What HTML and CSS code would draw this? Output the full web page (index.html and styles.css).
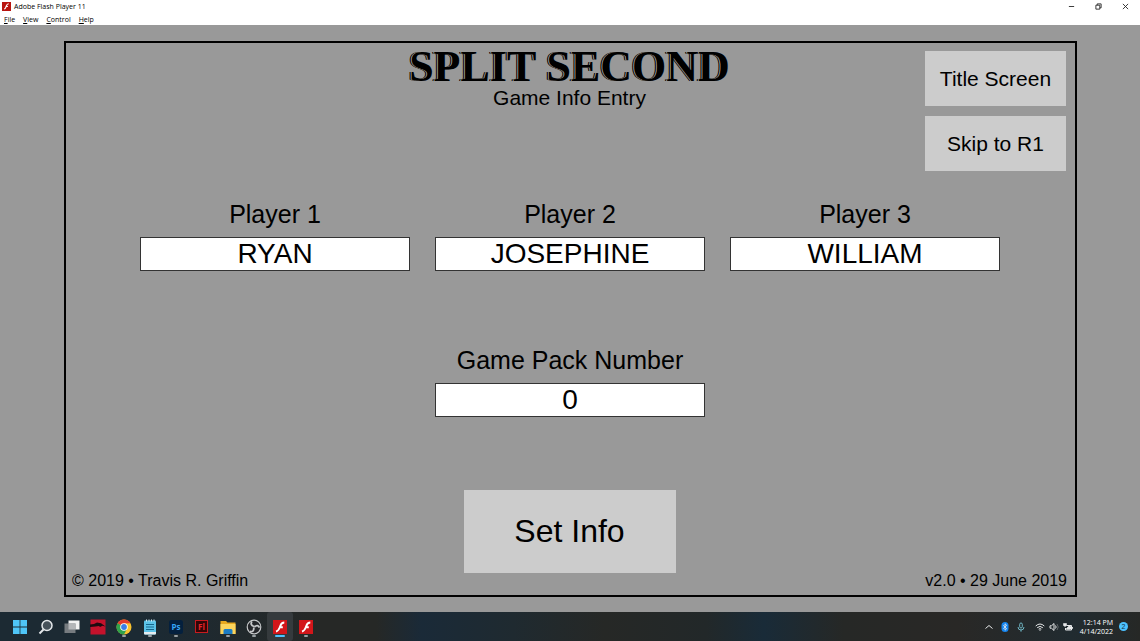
FILE: index.html
```html
<!DOCTYPE html>
<html lang="en">

<head>
    <meta charset="utf-8">
    <title>Adobe Flash Player 11</title>
    <link rel="stylesheet" href="styles.css">
</head>

<body>
    <header class="window_bar">
        <div class="title_row">
            <svg class="app_icon" viewBox="0 0 16 16">
                <rect width="16" height="16" fill="#b8140f"/>
                <path d="M12 3.200c-3.600 0-4 3-5 5.600-.7 1.800-1.400 3.200-3.200 3.600M7.300 8h3.200" fill="none" stroke="#fff" stroke-width="2"/>
            </svg>
            <p class="app_name">Adobe Flash Player 11</p>
            <div class="window_controls">
                <button class="control" aria-label="Minimize">
                    <svg viewBox="0 0 8 8"><path d="M1 4h6"/></svg>
                </button>
                <button class="control" aria-label="Restore">
                    <svg viewBox="0 0 8 8"><path d="M1 2.500h4.500v4.500h-4.500zM2.500 2.500v-1.500h4.500v4.500h-1.500"/></svg>
                </button>
                <button class="control" aria-label="Close">
                    <svg viewBox="0 0 8 8"><path d="M1 1l6 6M7 1l-6 6"/></svg>
                </button>
            </div>
        </div>
        <nav class="menu">
            <a href="#"><u>F</u>ile</a>
            <a href="#"><u>V</u>iew</a>
            <a href="#"><u>C</u>ontrol</a>
            <a href="#"><u>H</u>elp</a>
        </nav>
    </header>

    <main class="stage">
        <form class="panel">
            <div class="panel_top">
                <div class="heading">
                    <h1 class="logo">SPLIT SECOND</h1>
                    <p class="subtitle">Game Info Entry</p>
                </div>
                <div class="shortcuts">
                    <button type="button" class="btn">Title Screen</button>
                    <button type="button" class="btn">Skip to R1</button>
                </div>
            </div>

            <div class="fields">
                <div class="field">
                    <label for="player1">Player 1</label>
                    <input type="text" id="player1" value="RYAN">
                </div>
                <div class="field">
                    <label for="player2">Player 2</label>
                    <input type="text" id="player2" value="JOSEPHINE">
                </div>
                <div class="field">
                    <label for="player3">Player 3</label>
                    <input type="text" id="player3" value="WILLIAM">
                </div>
                <div class="field field_pack">
                    <label for="pack">Game Pack Number</label>
                    <input type="text" id="pack" value="0">
                </div>
            </div>

            <button type="button" class="btn btn_large">Set Info</button>

            <div class="panel_bottom">
                <p>© 2019 • Travis R. Griffin</p>
                <p>v2.0 • 29 June 2019</p>
            </div>
        </form>
    </main>

    <footer class="taskbar">
        <div class="tasks">
            <button class="task" aria-label="Start">
                <svg viewBox="0 0 16 16">
                    <path d="M1 1h6.600v6.600h-6.600zM8.400 1h6.600v6.600h-6.600zM1 8.400h6.600v6.600h-6.600zM8.400 8.400h6.600v6.600h-6.600z" fill="#4fc5f7"/>
                </svg>
            </button>
            <button class="task" aria-label="Search">
                <svg viewBox="0 0 16 16">
                    <circle cx="9" cy="6.500" r="5" fill="#46525a" stroke="#e4e8ea" stroke-width="1.500"/>
                    <path d="M5.500 10.500l-4 4" stroke="#e4e8ea" stroke-width="2"/>
                </svg>
            </button>
            <button class="task" aria-label="Task view">
                <svg viewBox="0 0 16 16">
                    <rect x="4.500" y="1.500" width="11" height="9" fill="#f2f2f2"/>
                    <rect x=".5" y="4.500" width="11" height="9.500" fill="#777c80"/>
                    <rect x="4.500" y="4.500" width="7" height="6" fill="#b4b6b8"/>
                </svg>
            </button>
            <button class="task" aria-label="Dragon">
                <svg viewBox="0 0 16 16">
                    <rect x=".5" y=".5" width="15" height="15" fill="#c4122c"/>
                    <path d="M0 5.500l4-.5 3-1.500 4 .7 4.500 3.300-3-.7-2.500 1.200-1-1-3.500.5-5.500.5z" fill="#1c0b10"/>
                </svg>
            </button>
            <button class="task running" aria-label="Chrome">
                <svg viewBox="0 0 16 16">
                    <circle cx="8" cy="8" r="7.500" fill="#f9c22e"/>
                    <path d="M8 8L1.500 4.250A7.500 7.500 0 0 1 14.500 4.250L8 4.500z" fill="#e33b2e"/>
                    <path d="M8 8L1.500 4.250A7.500 7.500 0 0 0 8 15.500L11 9.700z" fill="#2fa24c"/>
                    <circle cx="8" cy="8" r="3.800" fill="#fff"/>
                    <circle cx="8" cy="8" r="2.900" fill="#3b7de8"/>
                </svg>
            </button>
            <button class="task running" aria-label="Notepad">
                <svg viewBox="0 0 16 16">
                    <rect x="2" y="1.500" width="12" height="14" rx="1" fill="#5cc3e8"/>
                    <path d="M2 13h12v1.500a1 1 0 0 1-1 1h-10a1 1 0 0 1-1-1z" fill="#e6edf0"/>
                    <path d="M4 5.500h8M4 8h8M4 10.500h8" stroke="#17688e"/>
                    <path d="M4.500 .5v2M7 .5v2M9.500 .5v2M12 .5v2" stroke="#d6f0fa"/>
                </svg>
            </button>
            <button class="task running" aria-label="Photoshop">
                <svg viewBox="0 0 16 16">
                    <rect x="1" y="1" width="14" height="14" rx="2.500" fill="#04203e"/>
                    <text x="8" y="11" class="glyph" fill="#36a6f8">Ps</text>
                </svg>
            </button>
            <button class="task" aria-label="Flash">
                <svg viewBox="0 0 16 16">
                    <rect x="1.500" y="1.500" width="12" height="12" fill="#330607" stroke="#c71b1f"/>
                    <text x="7.500" y="11" class="glyph" fill="#e6252a">Fl</text>
                </svg>
            </button>
            <button class="task running" aria-label="File Explorer">
                <svg viewBox="0 0 16 16">
                    <path d="M.5 2h5.500l1.500 1.500h8v11.500h-15z" fill="#e9a91f"/>
                    <path d="M.5 5h15v10h-15z" fill="#fcd45c"/>
                    <path d="M3.500 15v-3.500a1.500 1.500 0 0 1 1.500-1.500h6a1.500 1.500 0 0 1 1.500 1.500v3.500z" fill="#1c7cc4"/>
                </svg>
            </button>
            <button class="task running" aria-label="OBS">
                <svg viewBox="0 0 16 16">
                    <circle cx="8" cy="8" r="6.800" fill="#24262a" stroke="#c6c8ca" stroke-width="1.200"/>
                    <path d="M8 7.500c-3-1-3.500-3-2-5M8.500 8c2-2.300 4-1.500 5 .7M7.700 8.500c.5 3-1 4.500-3.700 4" fill="none" stroke="#c6c8ca" stroke-width="1.800"/>
                </svg>
            </button>
            <button class="task running active" aria-label="Flash Player">
                <svg viewBox="0 0 16 16">
                    <rect x="1" y="1" width="14" height="14" fill="#d3161a"/>
                    <path d="M12.300 3.500c-3.600 0-3.600 2.800-4.600 5-.7 1.800-1.600 3.500-3.700 4M7.500 8.200h3.300" fill="none" stroke="#fff" stroke-width="1.900"/>
                </svg>
            </button>
            <button class="task running" aria-label="Flash Player">
                <svg viewBox="0 0 16 16">
                    <rect x="1" y="1" width="14" height="14" fill="#d3161a"/>
                    <path d="M12.300 3.500c-3.600 0-3.600 2.800-4.600 5-.7 1.800-1.600 3.500-3.700 4M7.500 8.200h3.300" fill="none" stroke="#fff" stroke-width="1.900"/>
                </svg>
            </button>
        </div>

        <div class="tray">
            <svg viewBox="0 0 10 10"><path d="M1.500 6.500l3.500-3 3.500 3"/></svg>
            <svg viewBox="0 0 10 10">
                <rect x="1.500" width="7" height="10" rx="3.500" fill="#1686f0" stroke="none"/>
                <path d="M3.200 3.300l3.500 3.400-1.700 1.500v-6.400l1.700 1.500-3.500 3.400" stroke-width=".8"/>
            </svg>
            <svg viewBox="0 0 10 10" class="mic">
                <rect x="3.700" y="1" width="2.600" height="5" rx="1.300"/>
                <path d="M2 5a3 3 0 0 0 6 0M5 8v1.700"/>
            </svg>
            <div class="status">
                <svg viewBox="0 0 10 10">
                    <path d="M.7 4q4.300-4 8.600 0M2.200 5.700q2.800-2.600 5.600 0M3.700 7.200q1.300-1.200 2.600 0"/>
                    <circle cx="5" cy="8.200" r=".6" fill="#e8eaeb" stroke="none"/>
                </svg>
                <svg viewBox="0 0 10 10">
                    <path d="M1 3.800h1.500l2.500-2.300v7l-2.500-2.300h-1.500z"/>
                    <path d="M6.500 3.500q1.300 1.500 0 3"/>
                    <path d="M8 2q2.500 3 0 6" stroke="#61676a"/>
                </svg>
                <svg viewBox="0 0 10 10">
                    <path d="M3.500 3.500h5v4.500h-6v-2M9.600 5v1.800"/>
                    <path d="M5.500 4.500h2v2.500h-4z" fill="#e8eaeb"/>
                    <path d="M.5 1.500h3v2l-1.500 1-1.500-1z" fill="#e8eaeb" stroke-width=".6"/>
                </svg>
            </div>
            <div class="clock">
                <p>12:14 PM</p>
                <p>4/14/2022</p>
            </div>
            <span class="badge">2</span>
        </div>
    </footer>
</body>

</html>
```
FILE: styles.css
```css
* {
    box-sizing: border-box;
}

body {
    margin: 0;
    min-height: 100vh;
    display: flex;
    flex-direction: column;
    font-family: "Liberation Sans", Arial, sans-serif;
    color: black;
    background-color: #999999;
}

p,
h1 {
    margin: 0;
}

button {
    border: none;
    padding: 0;
    color: inherit;
    font-family: inherit;
    background: none;
}

a {
    color: black;
    text-decoration: none;
}

/* window */

.window_bar {
    background-color: white;
    font-family: "Open Sans", sans-serif;
    font-size: 7px;
    line-height: 12px;
}

.title_row {
    display: flex;
    align-items: center;
    height: 13px;
    padding: 0 1px 0 2px;
}

.app_icon {
    width: 9px;
    height: 9px;
    margin-right: 3px;
}

.window_controls {
    display: flex;
    margin-left: auto;
}

.control {
    width: 27px;
    height: 13px;
    display: flex;
    align-items: center;
    justify-content: center;
}

.control svg {
    width: 7px;
    height: 7px;
    fill: none;
    stroke: #222222;
    stroke-width: 1;
}

.menu {
    display: flex;
    gap: 8px;
    height: 12px;
    padding-left: 4px;
    line-height: 14px;
}

/* stage */

.stage {
    flex: 1;
    display: flex;
    padding: 16px 63px 15px 64px;
}

.panel {
    flex: 1;
    display: flex;
    flex-direction: column;
    border: 2px solid black;
    padding: 8px 8px 7px 6px;
}

.panel_top {
    display: grid;
    grid-template-columns: 1fr auto 1fr;
    height: 150px;
}

.heading {
    grid-column: 2;
    text-align: center;
}

.logo {
    font-family: "Liberation Serif", "Times New Roman", serif;
    font-size: 44px;
    line-height: 32px;
    font-weight: bold;
    text-shadow: -1px 0 #999999, -2px 0 black;
}

.subtitle {
    padding-top: 3px;
    font-size: 21px;
    line-height: 24px;
}

.shortcuts {
    justify-self: end;
    width: 142px;
    padding-right: 1px;
    display: flex;
    flex-direction: column;
    gap: 10px;
}

.btn {
    height: 55px;
    font-size: 21px;
    background-color: #cccccc;
}

.fields {
    display: grid;
    grid-template-columns: repeat(3, 1fr);
    gap: 76px 25px;
    padding: 0 67px 0 68px;
}

.field {
    display: flex;
    flex-direction: column;
    text-align: center;
}

.field_pack {
    grid-column: 2;
}

.field label {
    font-size: 25px;
    line-height: 26px;
    padding-bottom: 10px;
}

.field input {
    width: 100%;
    height: 34px;
    padding: 0;
    border: 1px solid #333333;
    font-family: inherit;
    font-size: 28px;
    text-align: center;
    background-color: white;
}

.btn_large {
    width: 212px;
    height: 83px;
    margin-top: auto;
    align-self: center;
    font-size: 32px;
}

.panel_bottom {
    display: flex;
    justify-content: space-between;
    font-size: 16px;
    line-height: 15px;
}

/* taskbar */

.taskbar {
    display: flex;
    justify-content: space-between;
    height: 29px;
    background: linear-gradient(90deg, #1c2a33 0%, #1c2a33 14%, #262826 28%, #262826 33%, #1a2a38 37%, #1f2a30 45%, #262826 53%, #222829 62%, #192b38 67%, #262826 74%, #292826 84%, #212b30 94%, #262826 100%);
    color: white;
}

.tasks {
    display: flex;
    padding-left: 7px;
}

.task {
    width: 26px;
    display: flex;
    flex-direction: column;
    align-items: center;
    padding-top: 7px;
}

.task svg {
    width: 16px;
    height: 16px;
}

.running::after {
    content: "";
    width: 4px;
    height: 2px;
    border-radius: 1px;
    background-color: #9aa0a4;
}

.active {
    background-color: #353a3d;
    border-radius: 3px;
}

.active::after {
    width: 10px;
    background-color: #4cc2ff;
}

.glyph {
    font-family: "Open Sans", sans-serif;
    font-size: 8px;
    font-weight: bold;
    text-anchor: middle;
}

.tray {
    display: flex;
    align-items: center;
    gap: 6px;
    padding-right: 12px;
}

.tray svg {
    width: 10px;
    height: 10px;
    fill: none;
    stroke: #e8eaeb;
    stroke-width: 1;
}

.tray .mic {
    stroke: #6fb6c4;
}

.status {
    display: flex;
    gap: 4px;
    padding-left: 3px;
}

.clock {
    padding-left: 1px;
    font-family: "Open Sans", sans-serif;
    font-size: 7px;
    line-height: 9px;
    text-align: right;
}

.badge {
    width: 9px;
    height: 9px;
    border-radius: 50%;
    font-size: 7px;
    line-height: 9px;
    text-align: center;
    color: #10303f;
    background-color: #4cc2ff;
}
```
